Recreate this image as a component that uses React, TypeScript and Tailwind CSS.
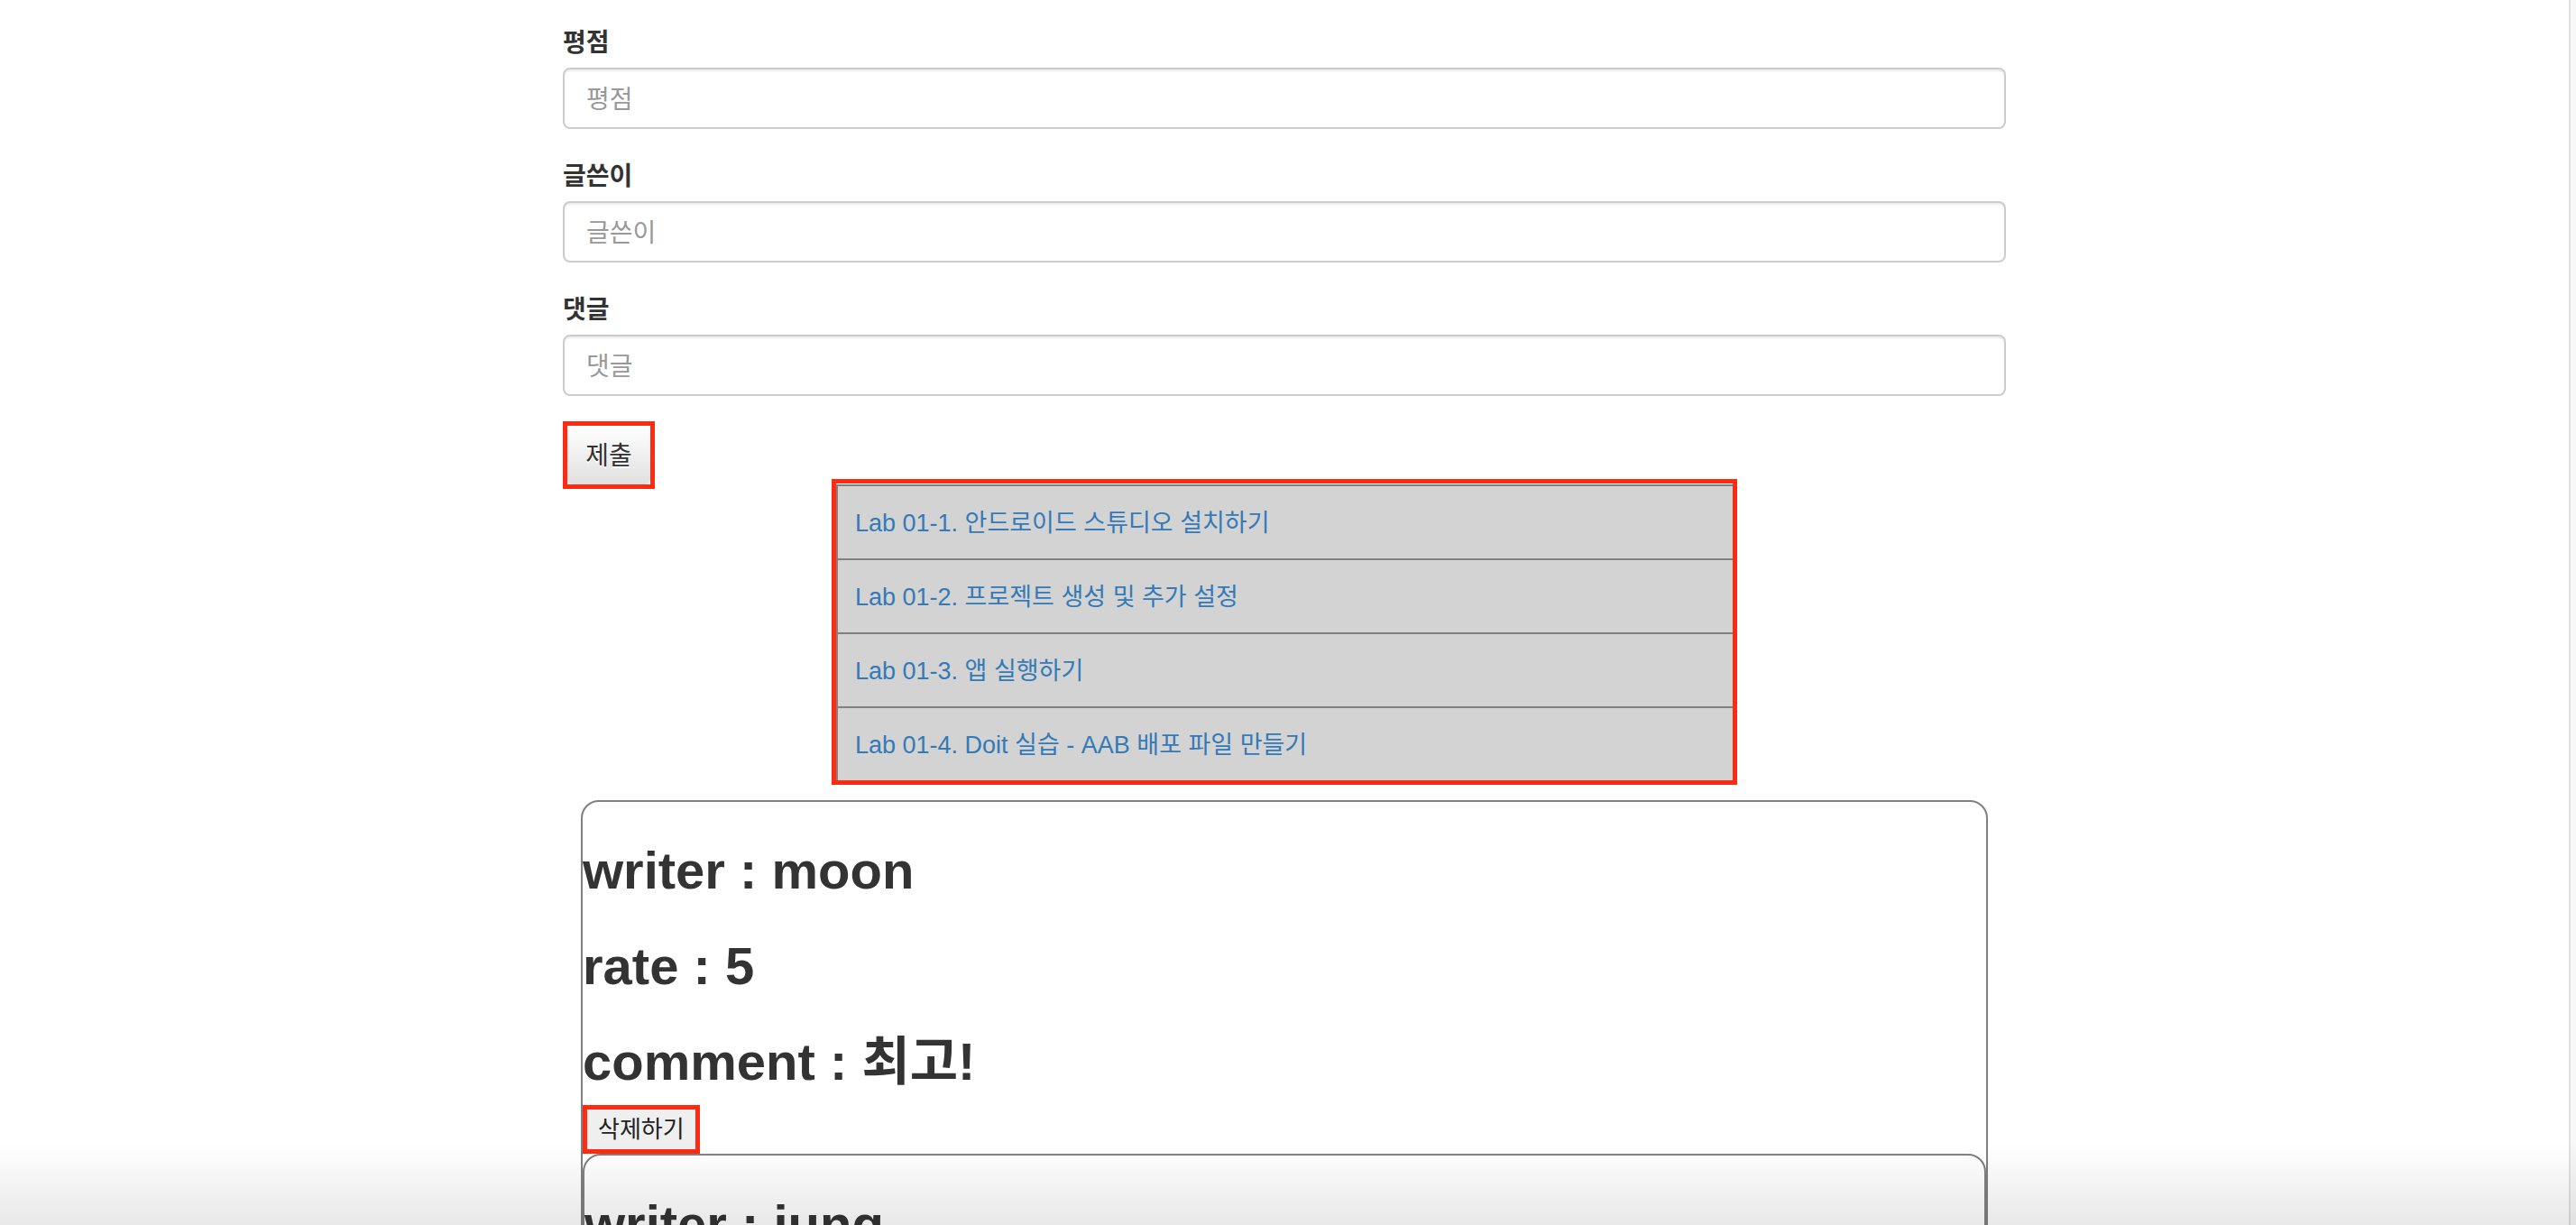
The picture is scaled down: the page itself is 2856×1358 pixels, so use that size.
import React from "react";

const labs = [
  "Lab 01-1. 안드로이드 스튜디오 설치하기",
  "Lab 01-2. 프로젝트 생성 및 추가 설정",
  "Lab 01-3. 앱 실행하기",
  "Lab 01-4. Doit 실습 - AAB 배포 파일 만들기",
];

const fields = ["평점", "글쓴이", "댓글"];

function Field({ label, last }: { label: string; last?: boolean }) {
  return (
    <div className={last ? "mb-[28px]" : "mb-[30px]"}>
      <label className="mb-[10px] block h-[40px] text-[28px] font-bold leading-[46px] text-[#333]">
        {label}
      </label>
      <input
        type="text"
        placeholder={label}
        className="block h-[68px] w-full rounded-[8px] border-2 border-[#ccc] bg-white px-[24px] pt-[3px] text-[28px] text-[#555] shadow-[inset_0_2px_2px_rgba(0,0,0,0.075)] outline-none placeholder:text-[#999]"
      />
    </div>
  );
}

function Review({ writer, rate, comment, children }: { writer: string; rate: number; comment: string; children?: React.ReactNode }) {
  return (
    <div className="rounded-[20px] border-2 border-[#808080] bg-white">
      <h2 className="mb-[20px] mt-[43px] text-[58px] font-bold leading-[66px] text-[#333]">writer : {writer}</h2>
      <h2 className="mb-[20px] mt-[40px] text-[58px] font-bold leading-[66px] text-[#333]">rate : {rate}</h2>
      <h2 className="mb-[15px] mt-[40px] text-[58px] font-bold leading-[66px] text-[#333]">comment : {comment}</h2>
      <button className="block h-[54px] border-[5px] border-[#ff2a12] bg-[#efefef] px-[12px] text-[26px] leading-[30px] text-[#222]">
        삭제하기
      </button>
      {children}
    </div>
  );
}

export default function App() {
  return (
    <div className="relative flex h-[1358px] w-full overflow-hidden bg-white font-['Liberation_Sans','Noto_Sans_CJK_KR',sans-serif] text-[#333]">
      <div className="min-w-0 flex-1">
        <form className="mx-auto w-[1600px] pt-[25px]" onSubmit={(e) => e.preventDefault()}>
          {fields.map((f, i) => (
            <Field key={f} label={f} last={i === fields.length - 1} />
          ))}
          <div className="h-[75px] w-[102px] border-[5px] border-[#ff2a12]">
            <button
              type="submit"
              className="h-full w-full rounded-[6px] bg-gradient-to-b from-white to-[#e0e0e0] pt-[2px] text-[28px] leading-[40px] text-[#333] [text-shadow:0_2px_0_#fff]"
            >
              제출
            </button>
          </div>
        </form>

        <ul className="mx-auto -mt-[11px] w-[1004px] border-[5px] border-[#ff2a12] bg-white pt-px">
          {labs.map((l) => (
            <li
              key={l}
              className="h-[82px] border-l-2 border-t-2 border-[#808080] bg-[#d3d3d3] pl-[19px] text-[27px] leading-[82px]"
            >
              <a href="#" className="text-[#337ab7]">{l}</a>
            </li>
          ))}
        </ul>

        <div className="mx-auto mt-[17px] w-[1560px]">
          <Review writer="moon" rate={5} comment="최고!">
            <Review writer="jung" rate={4} comment="좋아요" />
          </Review>
        </div>
      </div>
      <div className="w-[8px] border-l-2 border-[#e0e0e0] bg-[#f7f7f7]" />
      <div className="pointer-events-none absolute bottom-0 left-0 right-0 h-[90px] bg-gradient-to-b from-transparent to-[rgba(0,0,0,0.09)]" />
    </div>
  );
}
